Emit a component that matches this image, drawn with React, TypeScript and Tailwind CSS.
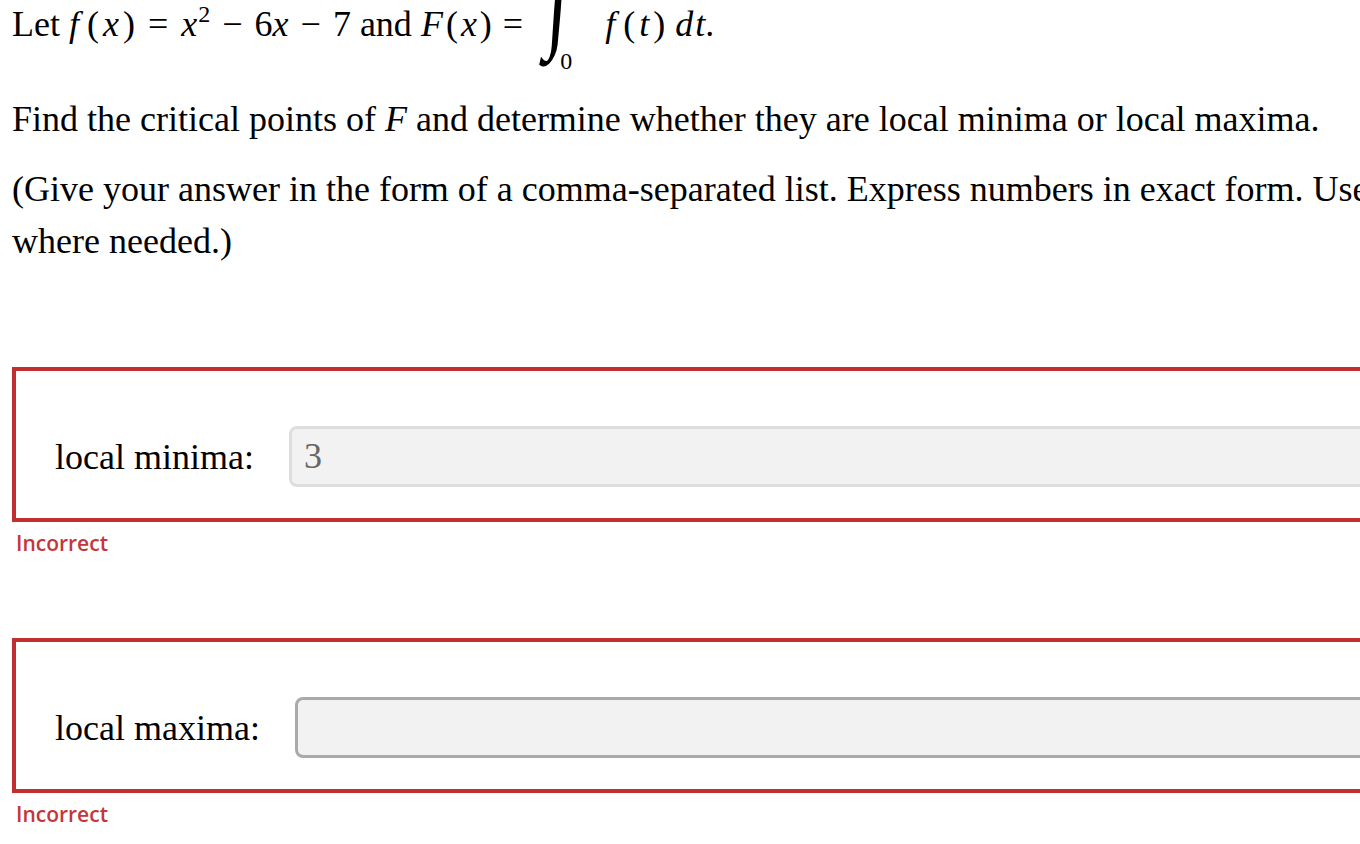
import React from 'react';

const serif = { fontFamily: '"Liberation Serif", "Times New Roman", serif' };

function I({ children, className = '' }: { children: React.ReactNode; className?: string }) {
  return <span className={'italic ' + className}>{children}</span>;
}

function AnswerBox({
  label,
  value,
  muted,
}: {
  label: string;
  value: string;
  muted?: boolean;
}) {
  return (
    <div>
      <div className="border-4 border-[#c22f2f] pl-[39px] pt-[55px] pb-[31px]">
        <div className="flex items-center gap-[35px]">
          <span className="whitespace-nowrap text-[36px] leading-[40px] text-black">{label}</span>
          <div
            className={
              'h-[61px] flex-1 rounded-[8px] border-[3px] bg-[#f2f2f2] pl-[12px] text-[36px] leading-[55px] text-[#666] ' +
              (muted ? 'border-[#dedede]' : 'border-[#aaaaaa]')
            }
          >
            {value}
          </div>
        </div>
      </div>
      <div
        className="ml-[4px] mt-[6px] text-[21px] font-semibold leading-[30px] text-[#c4363a]"
        style={{ fontFamily: '"Open Sans", "Noto Sans", sans-serif' }}
      >
        Incorrect
      </div>
    </div>
  );
}

export default function App() {
  return (
    <div className="relative h-[844px] w-[1360px] overflow-hidden bg-white" style={serif}>
      <div className="w-[1700px] pl-[12px] text-black">
        {/* math line, spacing nudged toward the MathJax rendering */}
        <p className="whitespace-nowrap text-[36px] leading-[48px]">
          Let <I className="mr-[8px]">f</I>(<I className="px-[4px]">x</I>) <span className="mx-[4px]">=</span>{' '}
          <I>x</I>
          <sup className="relative -top-[14px] ml-[1px] text-[24px]">2</sup> <span className="mx-[3px]">−</span> 6
          <I>x</I> <span className="mx-[3px]">−</span> 7 and <I className="mr-[3px]">F</I>(
          <I className="px-[3px]">x</I>) <span className="mx-[2px]">=</span>{' '}
          <span className="relative inline-block w-[62px] align-baseline">
            <span className="absolute left-[18px] top-[-56px] inline-block origin-top -skew-x-6 scale-y-[1.45] text-[76px] italic leading-none">
              ∫
            </span>
            <span className="absolute left-[26px] top-[49px] text-[24px] leading-none">0</span>
            &nbsp;
          </span>{' '}
          <I className="mr-[8px]">f</I>(<I className="px-[4px]">t</I>)
          <span className="ml-[10px]">
            <I className="mr-[2px]">d</I>
            <I>t</I>
          </span>
          .
        </p>

        <p className="mt-[45px] whitespace-nowrap text-[36px] leading-[52px]">
          Find the critical points of <I>F</I> and determine whether they are local minima or local maxima.
        </p>

        <p className="mt-[18px] whitespace-nowrap text-[36px] leading-[52px]">
          (Give your answer in the form of a comma-separated list. Express numbers in exact form. Use symbolic
          notation and fractions
          <br />
          where needed.)
        </p>

        <div className="mt-[100px]">
          <AnswerBox label="local minima:" value="3" muted />
        </div>

        <div className="mt-[80px]">
          <AnswerBox label="local maxima:" value="" />
        </div>
      </div>
    </div>
  );
}
